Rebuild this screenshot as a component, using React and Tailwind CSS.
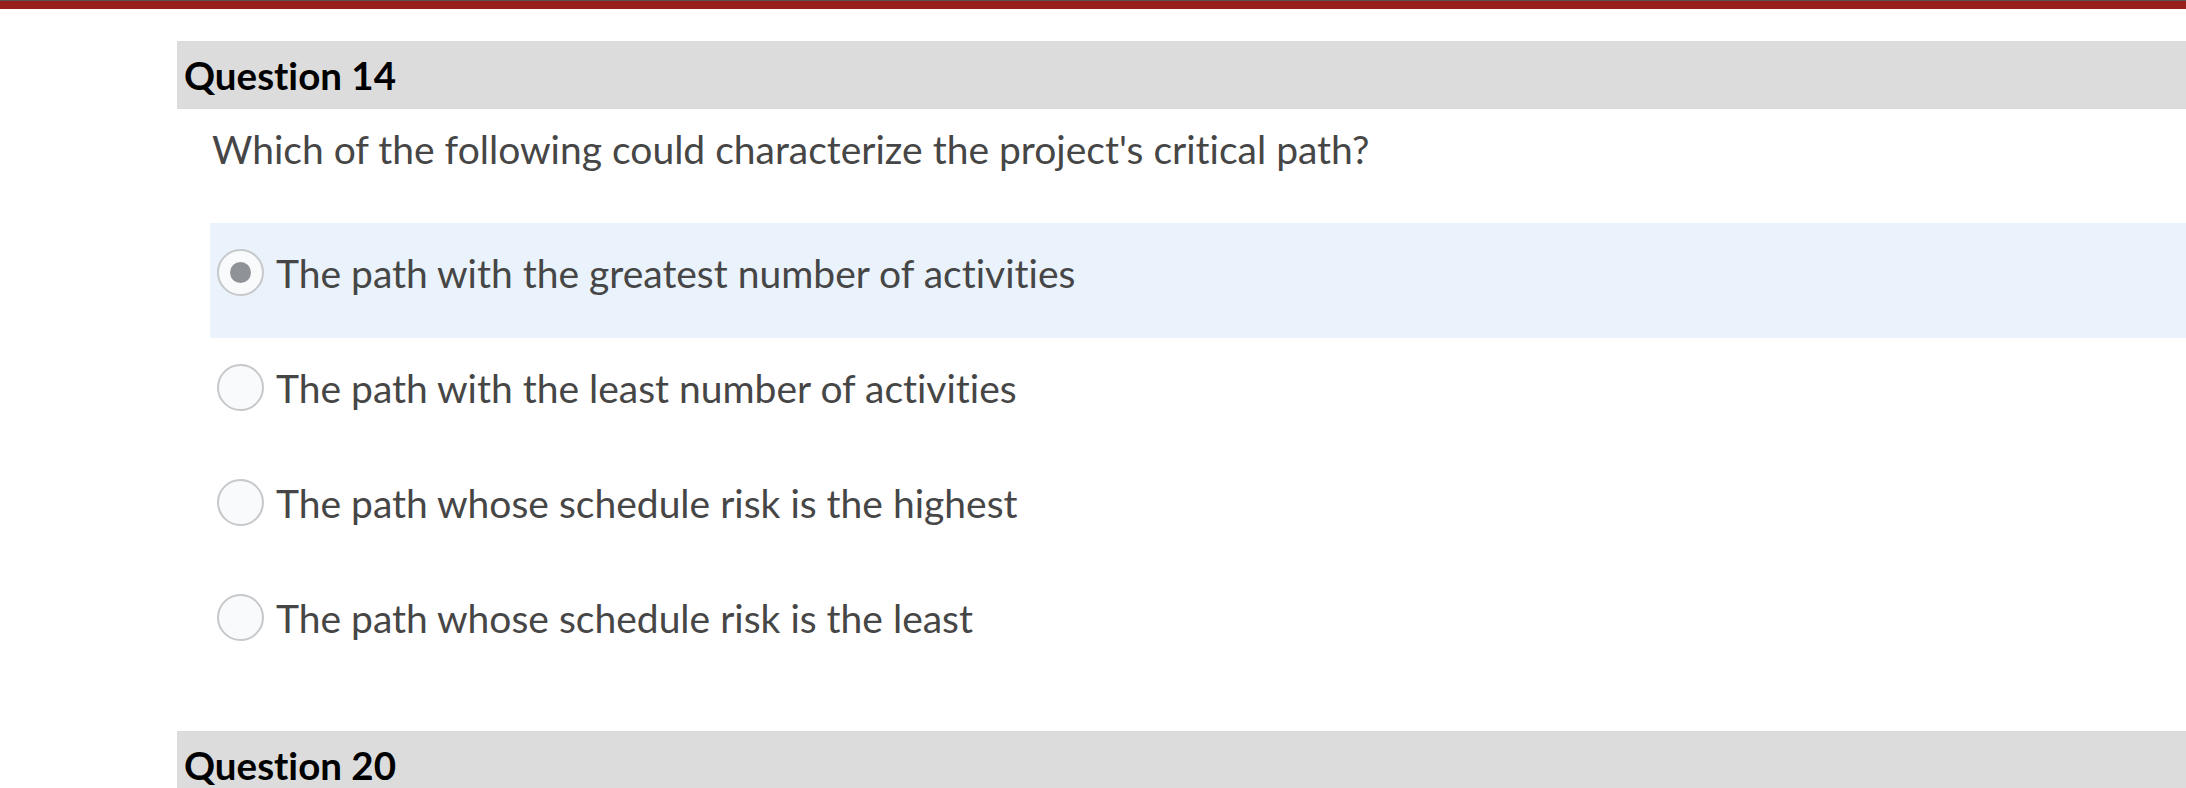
import React from "react";

const options = [
  { text: "The path with the greatest number of activities", selected: true },
  { text: "The path with the least number of activities", selected: false },
  { text: "The path whose schedule risk is the highest", selected: false },
  { text: "The path whose schedule risk is the least", selected: false },
];

function Radio({ selected }) {
  return (
    <div className="w-[47px] h-[47px] shrink-0 rounded-full border-2 border-[#c6c8cb] bg-[#f9fafc] flex items-center justify-center">
      {selected && <div className="w-[21px] h-[21px] rounded-full bg-[#8f9297]" />}
    </div>
  );
}

export default function App() {
  return (
    <div
      className="w-[2186px] h-[788px] overflow-hidden bg-white [font-variant-ligatures:none]"
      style={{ fontFamily: "Lato, 'Noto Sans', sans-serif" }}
    >
      <div className="h-[1px] bg-[#555555]" />
      <div className="h-[8px] bg-[#981f1a]" />
      <div className="ml-[177px] mt-[32px]">
        <div className="h-[68px] bg-[#dcdcdc] flex items-center pl-[7px]">
          <span className="text-[38.5px] leading-[38px] font-bold text-black">Question 14</span>
        </div>
        <div className="pl-[35px] mt-[21px] text-[39px] leading-[38px] text-[#464646]">
          Which of the following could characterize the project's critical path?
        </div>
        <div className="ml-[33px] mt-[55px]">
          {options.map((o, i) => (
            <div
              key={i}
              className={`h-[115px] pl-[7px] pt-[26px] ${o.selected ? "bg-[#eaf2fb]" : ""}`}
            >
              <div className="h-[47px] flex items-center gap-[12px]">
                <Radio selected={o.selected} />
                <span className="text-[39px] leading-[38px] text-[#464646] whitespace-nowrap">
                  {o.text}
                </span>
              </div>
            </div>
          ))}
        </div>
        <div className="mt-[48px] h-[68px] bg-[#dcdcdc] flex items-center pl-[7px]">
          <span className="text-[38.5px] leading-[38px] font-bold text-black">Question 20</span>
        </div>
      </div>
    </div>
  );
}
